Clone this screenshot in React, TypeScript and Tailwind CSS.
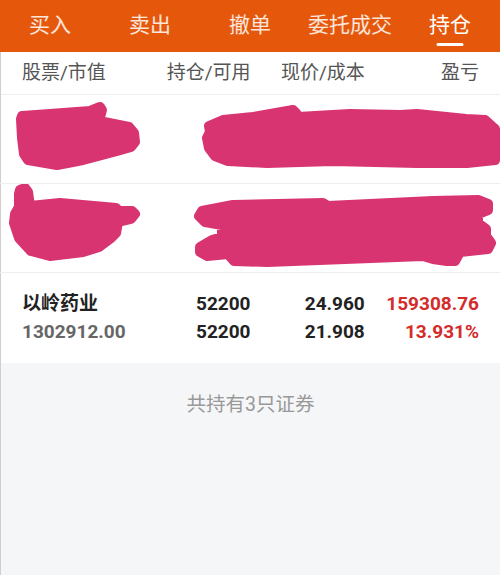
import React from 'react';

const tabs = ['买入', '卖出', '撤单', '委托成交', '持仓'];

const PINK = '#d93472';

// 打码涂鸦 (row-local coordinates)
const blobs: { left: string; right: string }[] = [
  {
    left: '22,21 50,19 90,16 100,12 102,15 99,26 129,32 134,38 135,47 131,52 117,56 83,65 57,70 28,65 24,59 22,43 21,24',
    right:
      '209,31 223,25 253,22 293,15 296,18 298,22 350,19 400,20 417,19 466,24 485,25 495,34 498,53 495,65 467,68 417,68 333,66 267,68 228,66 215,61 209,53 207,43 210,37',
  },
  {
    left: '20,6 25,4 28,8 30,22 60,19 116,24 119,27 132,27 135,30 131,35 118,38 116,49 111,54 99,63 83,68 50,72 31,67 19,54 14,39 15,30 19,23 19,10',
    right:
      '202,27 233,21 323,19 328,22 433,17 478,16 488,20 488,26 478,30 478,39 486,45 486,52 491,59 488,65 460,68 455,77 447,77 433,75 423,72 267,78 234,77 228,70 207,72 200,68 200,63 212,56 222,53 222,41 205,38 199,32',
  },
];

function Scribble({ left, right }: { left: string; right: string }) {
  return (
    <svg width="500" height="88" viewBox="0 0 500 88" className="block">
      {[left, right].map((pts, i) => (
        <polygon
          key={i}
          points={pts}
          fill={PINK}
          stroke={PINK}
          strokeWidth={10}
          strokeLinejoin="round"
        />
      ))}
    </svg>
  );
}

export default function App() {
  return (
    <div
      className="w-[500px] h-[575px] flex flex-col bg-[#f5f6f8] overflow-hidden"
      style={{ fontFamily: 'Roboto, "Noto Sans CJK SC", sans-serif' }}
    >
      {/* 顶部标签 */}
      <div className="h-[52px] bg-[#e5580b] grid grid-cols-5 shrink-0">
        {tabs.map((t) => {
          const active = t === '持仓';
          return (
            <div key={t} className="relative flex items-center justify-center">
              <span className={`text-[21px] leading-none -mt-[2px] ${active ? 'text-white' : 'text-white/85'}`}>{t}</span>
              {active && (
                <span className="absolute left-1/2 -translate-x-1/2 bottom-[6px] w-[27px] h-[3px] rounded-full bg-white" />
              )}
            </div>
          );
        })}
      </div>

      <div className="bg-white border-l border-[#cfcfcf]">
        {/* 表头 */}
        <div className="h-[43px] grid grid-cols-4 pl-[21px] pr-[21px] items-center text-[19px] text-[#555] border-b border-[#eeeeee]">
          <span>股票/市值</span>
          <span className="text-right">持仓/可用</span>
          <span className="text-right">现价/成本</span>
          <span className="text-right">盈亏</span>
        </div>

        {blobs.map((b, i) => (
          <div key={i} className="h-[89px] border-b border-[#eeeeee] -ml-px">
            <Scribble left={b.left} right={b.right} />
          </div>
        ))}

        {/* 以岭药业 */}
        <div className="h-[90px] grid grid-cols-4 pl-[21px] pr-[21px] content-center gap-y-[6px] text-[19px] leading-[22px] font-bold text-[#222]">
          <span>以岭药业</span>
          <span className="text-right">52200</span>
          <span className="text-right">24.960</span>
          <span className="text-right text-[#d42b2b]">159308.76</span>
          <span className="text-[#666]">1302912.00</span>
          <span className="text-right">52200</span>
          <span className="text-right">21.908</span>
          <span className="text-right text-[#d42b2b]">13.931%</span>
        </div>
      </div>

      <div className="flex-1 border-l border-[#cfcfcf] flex justify-center pt-[32px]">
        <span className="text-[19.5px] leading-none text-[#999]">共持有3只证券</span>
      </div>
    </div>
  );
}
